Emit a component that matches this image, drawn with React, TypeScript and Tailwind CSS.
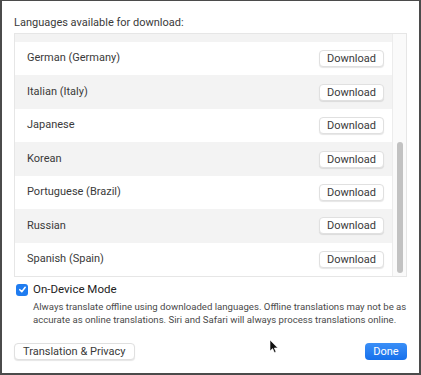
import React from "react";

const languages = [
	"German (Germany)",
	"Italian (Italy)",
	"Japanese",
	"Korean",
	"Portuguese (Brazil)",
	"Russian",
	"Spanish (Spain)",
];

const font = { fontFamily: "Roboto, 'Noto Sans', sans-serif" };

const App: React.FC = () => {
	return (
		<div
			style={font}
			className="relative w-[421px] h-[375px] bg-white border-t border-l-2 border-r-2 border-b-2 border-[#4b4b4b] text-[#2b2b2b] flex flex-col overflow-hidden"
		>
			<div className="shrink-0 pl-[12px] pt-[15px] h-[32px] text-[11px] leading-[14px] text-[#3a3a3a]">
				Languages available for download:
			</div>

			{/* list */}
			<div className="shrink-0 ml-[12px] mr-[12px] h-[244px] border border-[#e6e6e6] flex">
				<div className="flex-1 flex flex-col">
					<div className="h-[8px] bg-[#f3f3f3]" />
					{languages.map((lang, i) => (
						<div
							key={lang}
							className={`h-[33.6px] flex items-center justify-between pl-[12px] pr-[8px] ${
								i % 2 === 0 ? "bg-white" : "bg-[#f3f3f3]"
							}`}
						>
							<span className="text-[11px] text-[#3a3a3a]">{lang}</span>
							<button
								type="button"
								className="h-[17px] w-[65px] rounded-[4px] bg-white border border-[#e0e0e0] shadow-[0_1px_1px_rgba(0,0,0,0.1)] text-[11px] leading-none text-[#3a3a3a]"
							>
								Download
							</button>
						</div>
					))}
				</div>
				<div className="w-[14px] border-l border-[#ececec] bg-[#fafafa] flex flex-col pt-[108px] pb-[3px] items-center">
					<div className="w-[6px] flex-1 rounded-full bg-[#c2c2c2]" />
				</div>
			</div>

			{/* on-device */}
			<div className="shrink-0 pl-[14px] pt-[4px] flex items-center gap-[5px]">
				<div className="w-[12px] h-[12px] rounded-[3px] bg-[#1f7cf0] flex items-center justify-center">
					<svg width="9" height="9" viewBox="0 0 10 10">
						<path d="M2 5.2 L4.2 7.4 L8 2.6" stroke="white" strokeWidth="1.7" fill="none" strokeLinecap="round" strokeLinejoin="round" />
					</svg>
				</div>
				<span className="text-[11.5px] text-[#222]">On-Device Mode</span>
			</div>
			<div className="shrink-0 pl-[31px] pt-[2px] text-[9.6px] leading-[13px] text-[#4a4a4a] whitespace-nowrap">
				<div>Always translate offline using downloaded languages. Offline translations may not be as</div>
				<div>accurate as online translations. Siri and Safari will always process translations online.</div>
			</div>

			{/* footer */}
			<div className="mt-auto mb-[13px] px-[12px] flex items-center justify-between">
				<button
					type="button"
					className="h-[17px] px-[8px] rounded-[4px] bg-white border border-[#e0e0e0] shadow-[0_1px_1px_rgba(0,0,0,0.1)] text-[11px] leading-none text-[#3a3a3a]"
				>
					Translation &amp; Privacy
				</button>
				<button
					type="button"
					className="h-[17px] w-[42px] rounded-[4px] bg-gradient-to-b from-[#3a8ff7] to-[#1570ec] text-white text-[11px] leading-none"
				>
					Done
				</button>
			</div>

			{/* cursor */}
			<svg className="absolute left-[267px] top-[338px]" width="10" height="15" viewBox="0 0 10 15">
				<path d="M1 1 L1 12 L3.6 9.6 L5.4 13.6 L7 12.9 L5.3 9 L8.8 9 Z" fill="#111" stroke="#fff" strokeWidth="0.6" />
			</svg>
		</div>
	);
};

export default App;
